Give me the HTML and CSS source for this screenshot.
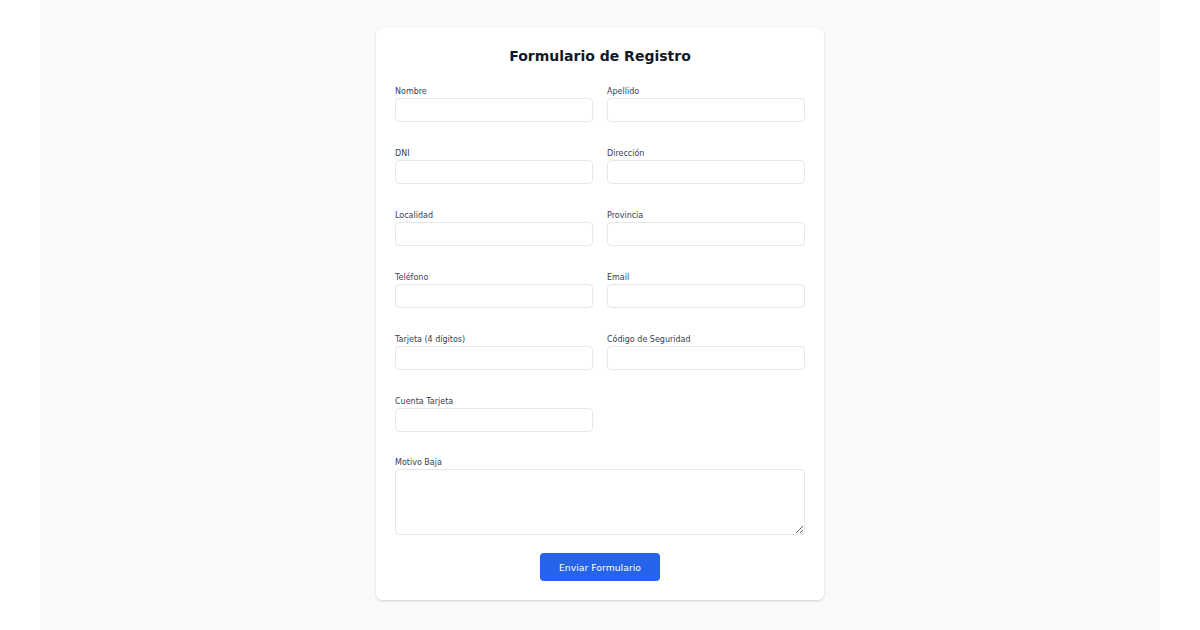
FILE: index.html
```html
<!DOCTYPE html>
<html lang="es">
<head>
<meta charset="utf-8">
<title>Formulario de Registro</title>
<link rel="stylesheet" href="styles.css">
</head>
<body>
<div class="page">
  <form class="card">
    <h1 class="title">Formulario de Registro</h1>
    <div class="grid">
      <div class="field"><label>Nombre</label><input type="text"></div>
      <div class="field"><label>Apellido</label><input type="text"></div>
      <div class="field"><label>DNI</label><input type="text"></div>
      <div class="field"><label>Dirección</label><input type="text"></div>
      <div class="field"><label>Localidad</label><input type="text"></div>
      <div class="field"><label>Provincia</label><input type="text"></div>
      <div class="field"><label>Teléfono</label><input type="text"></div>
      <div class="field"><label>Email</label><input type="text"></div>
      <div class="field"><label>Tarjeta (4 dígitos)</label><input type="text"></div>
      <div class="field"><label>Código de Seguridad</label><input type="text"></div>
      <div class="field"><label>Cuenta Tarjeta</label><input type="text"></div>
      <div class="field full"><label>Motivo Baja</label><textarea></textarea></div>
    </div>
    <div class="actions"><button type="button" class="btn">Enviar Formulario</button></div>
  </form>
</div>
</body>
</html>
```
FILE: styles.css
```css
html, body {
  margin: 0;
  padding: 0;
  background: #ffffff;
  font-family: "DejaVu Sans", sans-serif;
}
.page {
  width: 1120px;
  margin: 0 auto;
  height: 630px;
  background: #f9fafb;
  padding-top: 28px;
  box-sizing: border-box;
}
.card {
  width: 448px;
  margin: 0 auto;
  background: #ffffff;
  border-radius: 6px;
  box-shadow: 0 1px 3px rgba(0,0,0,0.12), 0 1px 2px rgba(0,0,0,0.06);
  padding: 18px 19px 19px;
  box-sizing: border-box;
}
.title {
  margin: 0 0 16px;
  text-align: center;
  font-size: 14px;
  line-height: 20px;
  font-weight: bold;
  color: #111827;
}
.grid {
  display: grid;
  grid-template-columns: 1fr 1fr;
  column-gap: 14px;
  row-gap: 22px;
}
.field {
  display: flex;
  flex-direction: column;
}
.field.full {
  grid-column: 1 / 3;
  margin-top: -1px;
}
.field label {
  font-size: 8px;
  line-height: 12px;
  color: #374151;
  padding-top: 4px;
  margin-bottom: 0;
}
.field input, .field textarea {
  display: block;
  width: 100%;
  box-sizing: border-box;
  height: 24px;
  border: 1px solid #e5e7eb;
  border-radius: 4px;
  background: #fff;
  font: inherit;
  font-size: 9px;
  padding: 0 6px;
  margin: 0;
}
.field textarea {
  height: 66px;
  resize: vertical;
  padding: 4px 6px;
}
.actions {
  display: flex;
  justify-content: center;
  margin-top: 18px;
}
.btn {
  width: 120px;
  height: 28px;
  background: #2563eb;
  color: #ffffff;
  border: none;
  border-radius: 4px;
  font-family: "DejaVu Sans", sans-serif;
  font-size: 9.3px;
  padding: 0;
}
```
